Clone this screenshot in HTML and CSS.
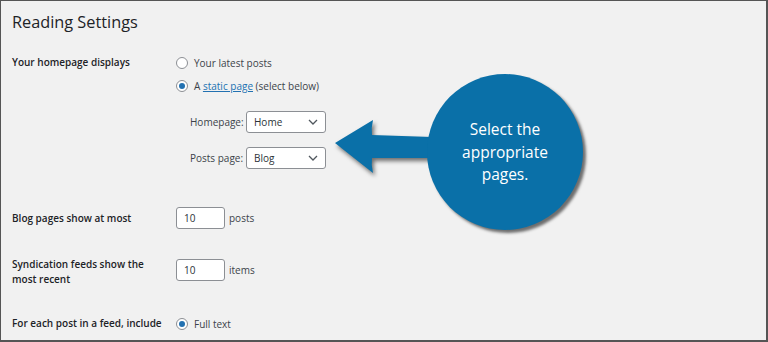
FILE: index.html
```html
<!DOCTYPE html>
<html lang="en">
<head>
  <meta charset="UTF-8" />
  <title>Reading Settings</title>
  <link rel="stylesheet" href="styles.css">
</head>
<body>
  <div class="frame">
    <h1>Reading Settings</h1>

    <div class="row row-first">
      <div class="label">Your homepage displays</div>
      <div class="field">
        <div class="option"><span class="radio"></span>Your latest posts</div>
        <div class="option"><span class="radio checked"></span>A&nbsp;<a href="#">static page</a>&nbsp;(select below)</div>
        <div class="pages">
          <div class="page-select">
            <span class="page-label">Homepage:</span>
            <div class="select">Home
              <svg class="chevron" viewBox="0 0 10 6" width="10" height="6"><path d="M1 1 L5 5 L9 1" fill="none" stroke="#50575e" stroke-width="1.3"/></svg>
            </div>
          </div>
          <div class="page-select">
            <span class="page-label">Posts page:</span>
            <div class="select">Blog
              <svg class="chevron" viewBox="0 0 10 6" width="10" height="6"><path d="M1 1 L5 5 L9 1" fill="none" stroke="#50575e" stroke-width="1.3"/></svg>
            </div>
          </div>
        </div>
      </div>
    </div>

    <div class="row row-blog">
      <div class="label">Blog pages show at most</div>
      <div class="field inline">
        <div class="number">10</div><span class="unit">posts</span>
      </div>
    </div>

    <div class="row row-feeds">
      <div class="label multi">Syndication feeds show the most recent</div>
      <div class="field inline">
        <div class="number">10</div><span class="unit">items</span>
      </div>
    </div>

    <div class="row row-include">
      <div class="label">For each post in a feed, include</div>
      <div class="field">
        <div class="option"><span class="radio checked"></span>Full text</div>
        <div class="option"><span class="radio"></span>Summary</div>
      </div>
    </div>

    <div class="callout">
      <svg class="arrow" viewBox="0 0 100 60" width="100" height="60">
        <path d="M1 24 L39 1 Q37 9 38 16 L98 18 L98 39 L38 39 Q37 46 39 54 Z" fill="#0a70a8"/>
      </svg>
      <div class="bubble">Select the<br>appropriate<br>pages.</div>
    </div>
  </div>
</body>
</html>
```

FILE: styles.css
```css
* {
  margin: 0;
  padding: 0;
  box-sizing: border-box;
}

body {
  background: #f1f1f1;
  font-family: 'Open Sans', 'Noto Sans', sans-serif;
  color: #1d2327;
}

.frame {
  position: relative;
  width: 768px;
  height: 342px;
  overflow: hidden;
  border: 1px solid #555;
  border-right-width: 2px;
  border-bottom-width: 2px;
  padding: 0 0 0 11px;
}

h1 {
  font-weight: 400;
  font-size: 16.3px;
  line-height: 22px;
  padding-top: 10px;
  color: #1d2327;
}

.row {
  display: flex;
  align-items: flex-start;
}

.row-first {
  padding-top: 18px;
}

.row-blog {
  padding-top: 24px;
}

.row-feeds {
  padding-top: 30px;
}

.row-include {
  padding-top: 25px;
}

.label {
  width: 164px;
  padding-right: 14px;
  font-size: 10px;
  font-weight: 600;
  line-height: 15px;
  padding-top: 4px;
}

.label.multi {
  padding-top: 0;
  margin-top: -2px;
}

.field {
  font-size: 10px;
  color: #3c434a;
}

.option {
  display: flex;
  align-items: center;
  height: 23px;
}

.radio {
  width: 12px;
  height: 12px;
  border: 1px solid #8c8f94;
  border-radius: 50%;
  background: #fff;
  margin-right: 6px;
  display: inline-flex;
  align-items: center;
  justify-content: center;
}

.radio.checked::after {
  content: "";
  width: 6px;
  height: 6px;
  border-radius: 50%;
  background: #2271b1;
}

.option a {
  color: #2271b1;
  text-decoration: underline;
}

.pages {
  padding: 14px 0 0 14px;
}

.page-select {
  display: flex;
  align-items: center;
  margin-bottom: 14px;
}

.page-label {
  width: 56px;
}

.select {
  position: relative;
  width: 80px;
  height: 22px;
  line-height: 20px;
  border: 1px solid #8c8f94;
  border-radius: 3px;
  background: #fff;
  padding-left: 7px;
  color: #2c3338;
}

.chevron {
  position: absolute;
  right: 7px;
  top: 7px;
}

.inline {
  display: flex;
  align-items: center;
}

.number {
  width: 49px;
  height: 22px;
  line-height: 20px;
  border: 1px solid #8c8f94;
  border-radius: 3px;
  background: #fff;
  padding-left: 7px;
  color: #2c3338;
}

.unit {
  margin-left: 4px;
}

.callout {
  position: absolute;
  left: 333px;
  top: 73px;
  width: 260px;
  height: 160px;
}

.arrow {
  position: absolute;
  left: 0;
  top: 45px;
  filter: drop-shadow(2px 3px 2px rgba(0, 0, 0, 0.55));
}

.bubble {
  position: absolute;
  left: 93px;
  top: 0;
  width: 156px;
  height: 156px;
  border-radius: 50%;
  background: #0a70a8;
  box-shadow: 3px 3px 3px rgba(0, 0, 0, 0.55);
  color: #fff;
  font-size: 15.5px;
  line-height: 22.5px;
  text-align: center;
  display: flex;
  align-items: center;
  justify-content: center;
}
```
